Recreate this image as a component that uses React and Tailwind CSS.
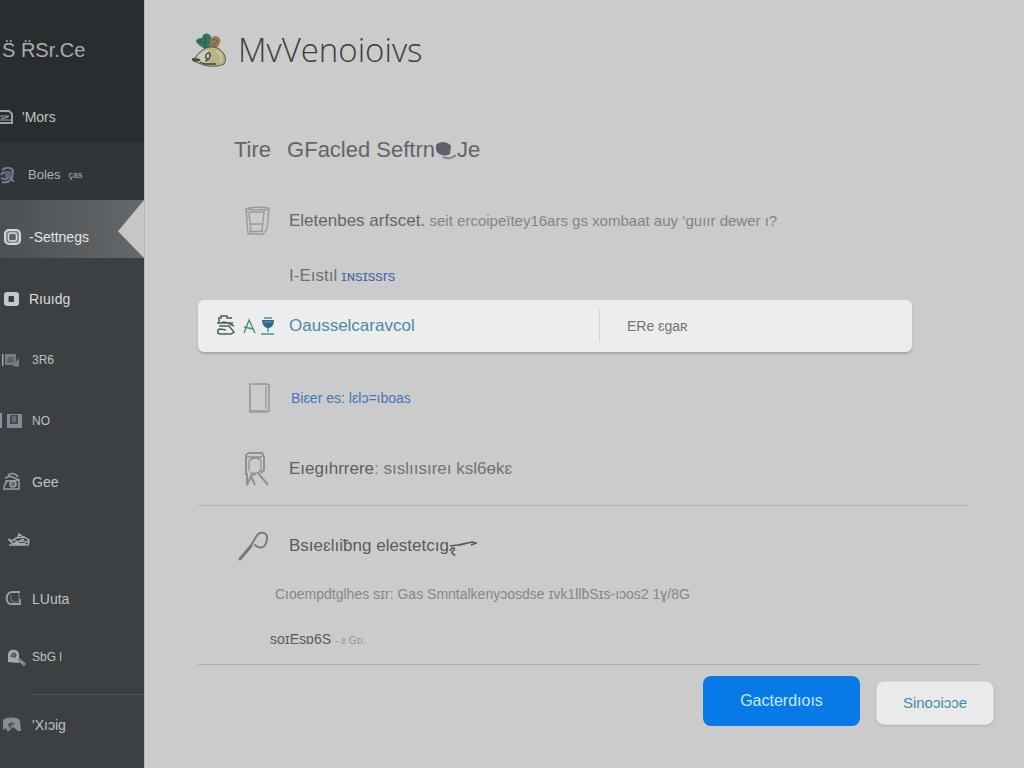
function MoreIcon() {
  return (
    <svg viewBox="0 0 18 18" className="h-[18px] w-[18px]" fill="none" stroke="#9da1a4" strokeWidth="2">
      <path d="M-2 3h11l3 3v9H-2" />
      <path d="M0 8h9M1 10c3 1 5 0 8-2M-1 12h12" strokeWidth="1.2" />
    </svg>
  );
}

function BolesIcon() {
  return (
    <svg viewBox="0 0 20 18" className="h-[18px] w-5" fill="none" stroke="#777b91" strokeWidth="2">
      <path d="M2 4c4-3 10-3 11 1l-1 7M1 9c2-4 8-4 8 0s-4 5-8 3M2 16c5 1 9-1 9-4l3 4" />
      <path d="M4 5h7v6H5z" fill="#5c617c" stroke="none" />
    </svg>
  );
}

function TargetIcon() {
  return (
    <svg viewBox="0 0 22 20" className="h-5 w-[22px]" fill="none" stroke="#d3d8dd" strokeWidth="2">
      <rect x="5" y="3" width="15" height="14" rx="4" fill="#7e868e" />
      <rect x="8.500" y="6" width="8" height="8" rx="2.500" fill="#5a636d" strokeWidth="1.300" />
    </svg>
  );
}

function SquareIcon() {
  return (
    <svg viewBox="0 0 20 20" className="h-5 w-5">
      <rect x="4" y="3" width="15" height="14" rx="3" fill="#c4c8ca" />
      <rect x="8.500" y="7" width="5.500" height="6" rx="1" fill="#3a3d40" />
    </svg>
  );
}

function PictureIcon() {
  return (
    <svg viewBox="0 0 20 16" className="h-4 w-5">
      <path d="M2 2h1.500v12H2z" fill="#a0a5a8" />
      <path d="M5 2h11v8l3-4v8l-3 1-4-2H5z" fill="#787c80" />
      <path d="m7 11 1-6h5l2 5z" fill="#5b6065" />
    </svg>
  );
}

function PanelIcon() {
  return (
    <svg viewBox="0 0 22 18" className="h-[18px] w-[22px]">
      <path d="M0 1h2v15H0z" fill="#8c9097" />
      <path d="M7 2h15v14H7z" fill="#858995" />
      <path d="M10 3h8v9h-8z" fill="#454a58" />
      <path d="M12 4h4v6h-4z" fill="#646a78" />
    </svg>
  );
}

function CameraIcon() {
  return (
    <svg viewBox="0 0 22 20" className="h-5 w-[22px]" fill="none" stroke="#9a9c9e" strokeWidth="1.600">
      <path d="M8 3c4-3 8-1 10 2M5 6l5-2 9 4M5 9l14-1v9H4c0-3 1-6 4-8" />
      <circle cx="13" cy="12" r="3" fill="#65686a" />
    </svg>
  );
}

function ShipIcon() {
  return (
    <svg viewBox="0 0 22 16" className="ml-2 h-4 w-[22px]" fill="none" stroke="#a8abad" strokeWidth="1.400">
      <path d="m0 6 4 2 4-3 8-1 5 3-2 2M1 12h19l1-3-9-1-7 3-4-4M5 6l5 3 6-3M10 4l1-3 4 3M3 10l15 1" />
    </svg>
  );
}

function BellIcon() {
  return (
    <svg viewBox="0 0 22 20" className="h-5 w-[22px]" fill="none" stroke="#9b9fa1" strokeWidth="2">
      <path d="M20 3h-7C5 2 5 15 11 15h9v-5" />
      <path d="M19 4v8c-3 2-6 1-8-1V6" stroke="#6a6e71" strokeWidth="1.500" />
    </svg>
  );
}

function SearchIcon() {
  return (
    <svg viewBox="0 0 28 20" className="h-5 w-7" fill="none">
      <path d="M8 15V8c0-7 11-7 11 0v8z" fill="#a6aaac" />
      <path d="m18 12 7 6" stroke="#878b8e" strokeWidth="3" />
      <path d="M11 10c0-5 5-5 5-2s-3 3-4 1" fill="#6b6f72" stroke="#3e4245" />
    </svg>
  );
}

function CloudIcon() {
  return (
    <svg viewBox="0 0 21 20" className="h-5 w-[21px]">
      <path d="M3 15V6c0-4 15-5 17 0l1 10h-3l-5-4-4 4H7l-1-3z" fill="#898c92" />
      <path d="M8 10c1-3 5-4 7-1l-3 1-2 4z" fill="#54575c" />
    </svg>
  );
}

function LogoIcon() {
  return (
    <svg viewBox="0 0 36 36" className="h-9 w-9" fill="none">
      <path d="M13 17 8 14 4 10c0-4 4-4 6-4C11-1 20 1 19 7l1 6-4 5z" fill="#377762" />
      <path d="m6 9 6 2 2 5M13 4l1 8" stroke="#23544b" />
      <path d="M19 6c4-4 11-1 9 4l-2 5-4 2-5-2z" fill="#94795a" />
      <path d="m21 7 5 2-5 4v3" stroke="#596b50" />
      <path d="M2 27C11 14 20 13 27 17c6 4 8 10 5 15-6 3-17 3-23 0L2 29z" fill="#b9b486" stroke="#565a45" />
      <path d="M5 28c0-5 6-9 11-10l1 12-6 1z" fill="#cccbb9" />
      <path d="M0 27h5l3 1-6 1zM13 29c5 0 7-9 3-8-3 1-3 6 0 6M8 30l5 2h11" stroke="#3f4338" strokeWidth="1.300" />
      <path d="M24 19c5 2 6 7 4 11" stroke="#d3c78e" strokeWidth="2" />
    </svg>
  );
}

function CupIcon() {
  return (
    <svg viewBox="0 0 28 32" className="h-8 w-7" fill="none" stroke="#999b9b" strokeWidth="1.400">
      <path d="M2 4c6-2 16-2 23-1l-2 21-4 5H4z" />
      <path d="M2 7h18l-2 20M5 8l2 18M6 19h12M5 27l14-1M4 4c6 2 12 0 20 1" />
    </svg>
  );
}

function DeviceIcon() {
  return (
    <svg viewBox="0 0 28 34" className="h-[34px] w-7" fill="none" stroke="#969898" strokeWidth="1.600">
      <path d="M6 3h17l2 1v26l-2 1H6z" />
      <path d="M22 5v23M6 30h17" strokeWidth="1.300" />
    </svg>
  );
}

function BadgeIcon() {
  return (
    <svg viewBox="0 0 28 36" className="h-9 w-7" fill="none" stroke="#8f9191" strokeWidth="2">
      <path d="M2 24V4l3-2h13l2 4v13l-3 3" />
      <path d="M3 6h15M5 20V10c3-4 10-4 12 0v9c-3 4-8 4-11 2" strokeWidth="1.300" />
      <path d="M3 22v12l4-9 4 9M7 24l5-1M14 22l10 12" />
    </svg>
  );
}

function WandIcon() {
  return (
    <svg viewBox="0 0 32 32" className="-ml-1.5 h-8 w-8" fill="none" stroke="#77797a" strokeLinecap="round">
      <path d="M2 29 13 16" strokeWidth="3" />
      <path d="M12 17 18 7c3-6 12-6 11 2-1 7-4 10-9 8l-3-2" strokeWidth="2" />
    </svg>
  );
}

function CardIcons() {
  return (
    <svg viewBox="0 0 60 24" className="h-6 w-[60px]" fill="none">
      <path d="M2 4h3V2h6v2h5M3 4v5h14M1 9h4l3-1 4 1 6 3" stroke="#4b6059" strokeWidth="1.500" />
      <path d="M3 12h10l5 6-3 2H4c-3 0-3-5 0-5l6 1" stroke="#4b6059" strokeWidth="1.500" />
      <path d="m28 19 5-13 6 13M28 13l9 2" stroke="#4d8b7c" strokeWidth="1.400" />
      <path d="M46 6h12c0 6-3 8-6 8s-6-3-6-8" fill="#35628c" />
      <path d="M48 4h8M47 8h10M52 14v4M45 20h13" stroke="#4a9296" strokeWidth="1.500" />
    </svg>
  );
}

function NavItem({ icon, label, className = "" }) {
  return (
    <a href="#" className={`flex items-center text-[#bfc2c4] ${className}`}>
      <span className="w-8 shrink-0">{icon}</span>
      {label}
    </a>
  );
}

function Row({ icon, children, className = "" }) {
  return (
    <div className={`flex items-center ${className}`}>
      <span className="flex w-[91px] shrink-0 pl-[46px]">{icon}</span>
      {children}
    </div>
  );
}

export default function App() {
  return (
    <div className="flex min-h-screen bg-[#cbcbcb] font-['Liberation_Sans',sans-serif]">
      <aside className="w-36 shrink-0 overflow-hidden bg-[#3c4043] text-sm">
        <div className="bg-[#292d30]">
          <div className="flex h-[84px] items-center pt-4 pl-0.5 text-xl text-[#a9adaf]">
            S̈ R̈Sr.Ce
          </div>
          <NavItem icon={<MoreIcon />} label="'Mors" className="h-[58px] pt-2 [&>span]:w-[22px]" />
        </div>
        <nav>
          <a href="#" className="flex h-[58px] items-center bg-[#313538] pt-2 text-[13px] text-[#b0b4b6]">
            <span className="w-7 shrink-0">
              <BolesIcon />
            </span>
            Boles <span className="ml-2 text-[9px]">ças</span>
          </a>
          <div className="flex h-[58px] bg-linear-to-r from-[#4c5053] to-[#66696b]">
            <NavItem icon={<TargetIcon />} label="-Settnegs" className="flex-1 pt-4 text-[#e2e4e5] [&>span]:w-[29px]" />
            <div className="w-[26px] bg-[#c5c6c7] [clip-path:polygon(100%_0,0_54%,100%_100%)]" />
          </div>
          <div className="pt-2.5">
            <NavItem icon={<SquareIcon />} label="Rıuıdg" className="h-[61px] text-[#dadcdd] [&>span]:w-[29px]" />
            <NavItem icon={<PictureIcon />} label="3R6" className="h-[61px] text-xs" />
            <NavItem icon={<PanelIcon />} label="NO" className="h-[61px] text-xs" />
            <NavItem icon={<CameraIcon />} label="Gee" className="h-[61px]" />
          </div>
          <NavItem icon={<ShipIcon />} className="h-[58px]" />
          <NavItem icon={<BellIcon />} label="LUuta" className="h-[58px]" />
          <NavItem icon={<SearchIcon />} label="SbG l" className="h-[58px] text-xs" />
          <div className="mt-2 ml-8 border-t border-[#505456]" />
          <NavItem icon={<CloudIcon />} label="'Xıɔig" className="h-[60px]" />
        </nav>
      </aside>

      <main className="min-w-0 flex-1 border-l border-[#b6b8b9] pl-[53px]">
        <header className="flex h-[100px] items-center gap-2.5">
          <span className="-ml-1.5">
            <LogoIcon />
          </span>
          <h1 className="font-['Open_Sans',sans-serif] text-[33px] font-light text-[#3b3e40]">
            MvVenoioivs
          </h1>
        </header>

        <h2 className="flex h-[98px] items-center pl-9 text-[22px] text-[#626567]">
          <span className="mr-4">Tire</span>
          <span>GFacled Seftrn</span>
          <svg viewBox="0 0 22 24" className="h-6 w-[22px]">
            <path d="M1 8c3-4 12-4 15 1l-1 8c-4 3-14 1-14-5z" fill="#5d616b" />
            <path d="M8 20c5 2 10 1 13-2" fill="none" stroke="#84878d" strokeWidth="2" />
          </svg>
          <span>Je</span>
        </h2>

        <Row icon={<CupIcon />} className="h-[46px]">
          <p className="whitespace-nowrap text-[#828485]">
            <span className="text-[17px] text-[#646767]">Eletenbes arfscet.</span>{" "}
            <span className="text-[15px]">seit ercoipeïtey16ars gs xombaat auy ‘guıır dewer ı?</span>
          </p>
        </Row>
        <Row className="h-14 pt-2">
          <a href="#" className="text-[15px] text-[#4768a7]">
            <span className="text-[17px] text-[#68717b]">I-Eıstıl</span> ɪɴsɪssrs
          </a>
        </Row>

        <div className="mr-28 flex h-[52px] items-center rounded-md bg-[#eceeed] shadow-[0_2px_2px_#a5a7a7]">
          <div className="flex flex-1 items-center pl-[18px]">
            <span className="w-[73px]">
              <CardIcons />
            </span>
            <a href="#" className="text-[17px] text-[#4d88a6]">
              Oausselcaravcol
            </a>
          </div>
          <div className="flex h-8 w-[313px] items-center border-l border-[#d2d4d4] pl-[27px] text-sm text-[#707373]">
            ERe ɛgaʀ
          </div>
        </div>

        <Row icon={<DeviceIcon />} className="h-[92px]">
          <a href="#" className="pl-0.5 text-sm text-[#3f76bd]">
            Biɛer es: lɛlɔ=ıboas
          </a>
        </Row>
        <Row icon={<BadgeIcon />} className="h-[61px] pb-3">
          <p className="text-[17px] text-[#717474]">
            <span className="text-[#5c5f60]">Eıegıhrrereː</span> sıslıısıreı ksl6ɵkɛ
          </p>
        </Row>

        <section className="mr-[57px] border-t border-[#b0b2b2]">
          <Row icon={<WandIcon />} className="h-[80px]">
            <h3 className="flex items-center text-[17px] text-[#595c5d]">
              Bsıeɛlıiƀng elestetcıg
              <svg viewBox="0 0 28 20" className="h-5 w-7" fill="none" stroke="#56595a" strokeWidth="1.500">
                <path d="m1 10 8-1 9-2M11 9l12-3 4 1-5 2M1 15c2-5 7-3 3 0s4 3 1 5" />
              </svg>
            </h3>
          </Row>
          <p className="h-[31px] pl-[77px] text-sm leading-4 whitespace-nowrap text-[#858787]">
            Cıoempdtglhes sɪr: Gas Smntalkenyɔosdse ɪvk1llƀSɪs-ıɔos2 1ɣ/8G
          </p>
          <p className="h-[47px] pt-3 pl-[72px] text-sm text-[#595c5d]">
            soɪEsɒ6S <span className="text-[10px] text-[#929494]">- ƨ Gɪı.</span>
          </p>
        </section>

        <footer className="mr-11 border-t border-[#adafaf] pt-[11px] pb-8">
          <div className="-mr-3.5 flex items-center justify-end gap-4">
            <button className="h-[50px] w-[157px] rounded-lg bg-[#077ae7] text-base text-[#c5ecff]">
              Gacterdıoıs
            </button>
            <button className="mt-1 h-11 w-[118px] rounded-lg border border-[#dadcdc] bg-[#e9eaea] text-[15px] text-[#4389a8] shadow-sm">
              Sinoɔiɔɔe
            </button>
          </div>
        </footer>
      </main>
    </div>
  );
}
